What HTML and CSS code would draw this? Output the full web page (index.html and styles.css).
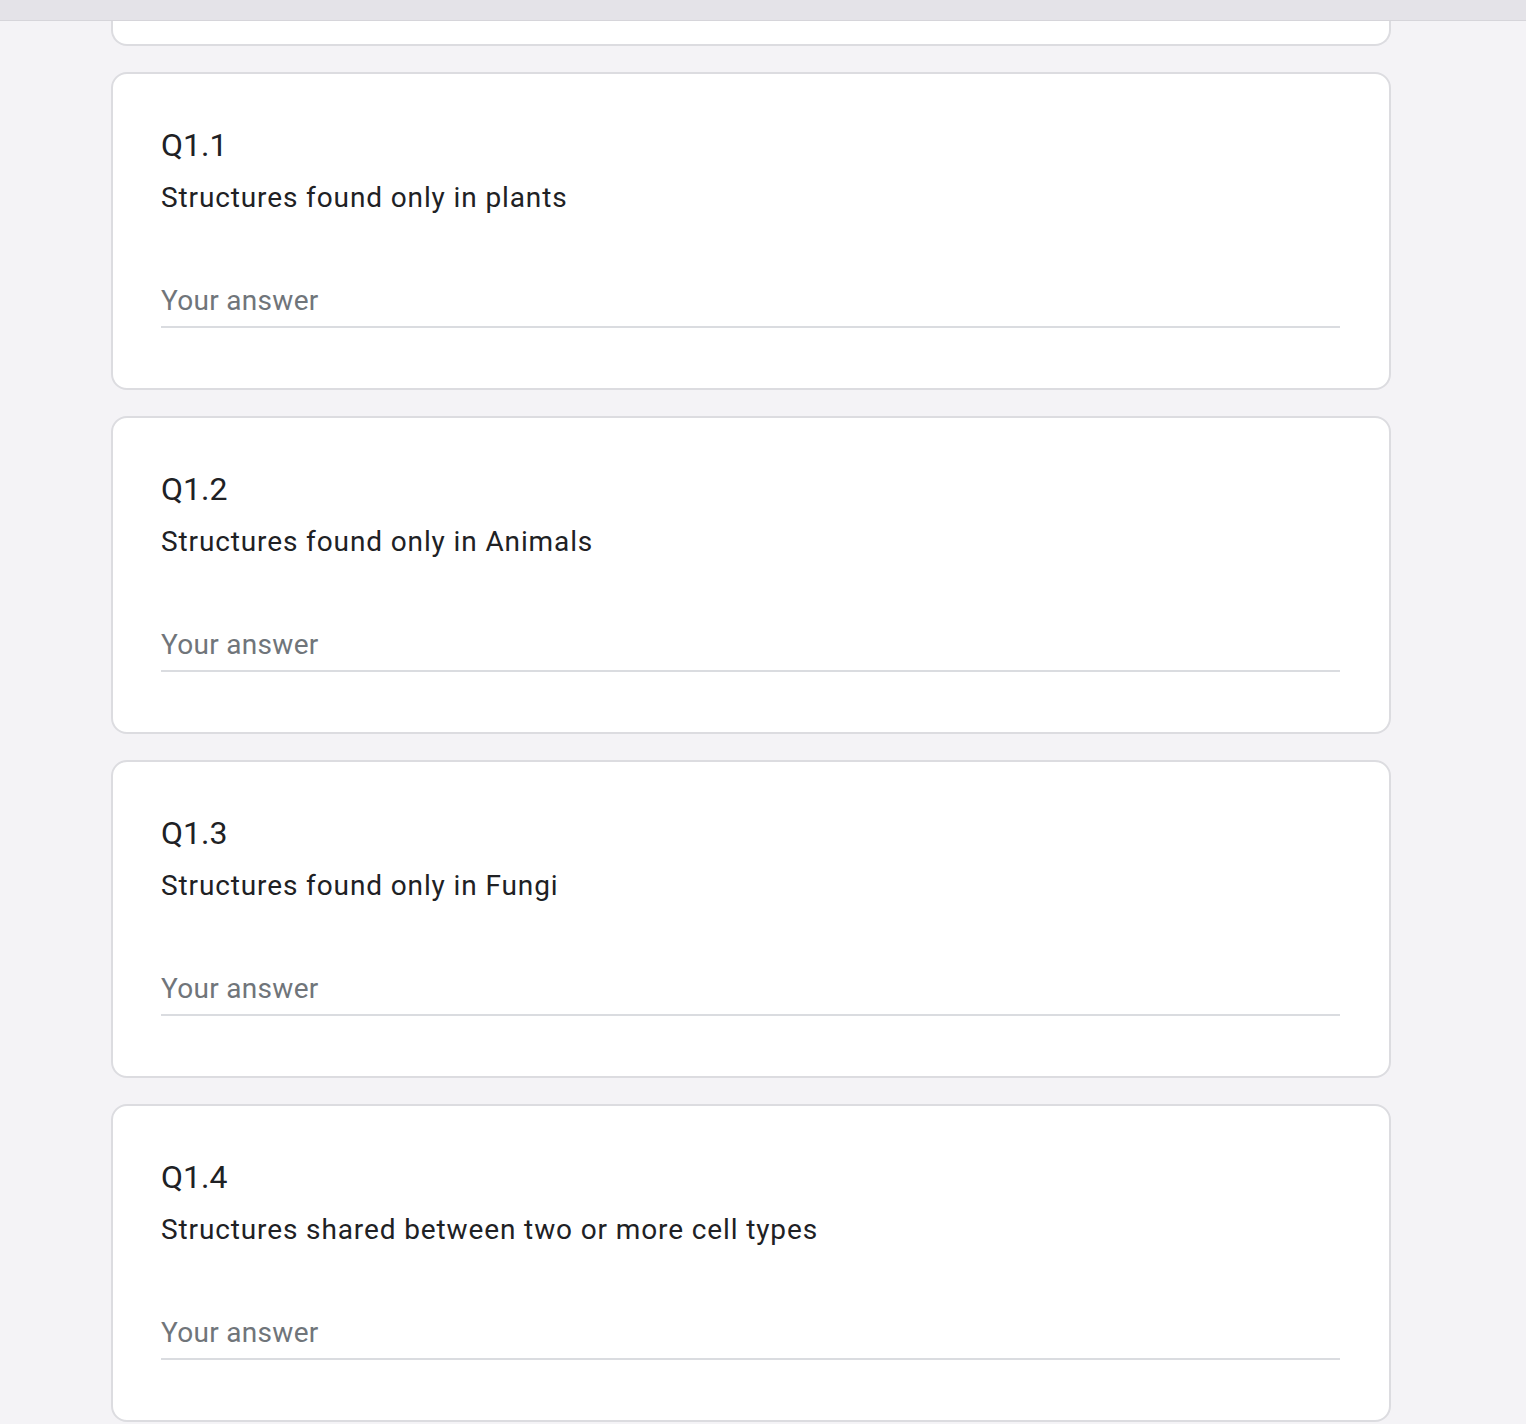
FILE: index.html
```html
<!DOCTYPE html>
<html lang="en">
<head>
<meta charset="utf-8">
<title>Form</title>
<link rel="stylesheet" href="styles.css">
</head>
<body>
<div class="topbar"></div>
<main class="form">
  <div class="card card-cut"></div>
  <section class="card">
    <div class="qnum">Q1.1</div>
    <div class="qtext">Structures found only in plants</div>
    <div class="answer">Your answer</div>
  </section>
  <section class="card">
    <div class="qnum">Q1.2</div>
    <div class="qtext">Structures found only in Animals</div>
    <div class="answer">Your answer</div>
  </section>
  <section class="card">
    <div class="qnum">Q1.3</div>
    <div class="qtext">Structures found only in Fungi</div>
    <div class="answer">Your answer</div>
  </section>
  <section class="card">
    <div class="qnum">Q1.4</div>
    <div class="qtext">Structures shared between two or more cell types</div>
    <div class="answer">Your answer</div>
  </section>
</main>
</body>
</html>
```

FILE: styles.css
```css
html, body {
  margin: 0;
  padding: 0;
}
body {
  background: #f4f3f6;
  font-family: Roboto, "Liberation Sans", Arial, sans-serif;
  color: #202124;
  overflow: hidden;
}
.topbar {
  height: 20px;
  background: #e4e3e8;
  border-bottom: 1px solid #d6d5da;
}
.form {
  width: 1280px;
  margin-left: 111px;
  display: flex;
  flex-direction: column;
  gap: 26px;
}
.card {
  background: #fff;
  border: 2px solid #dcdce0;
  border-radius: 16px;
  padding: 51px 49px 60px 48px;
  box-sizing: border-box;
  height: 318px;
}
.card-cut {
  height: 25px;
  padding: 0;
  border-top: none;
  border-radius: 0 0 16px 16px;
}
.qnum {
  font-size: 32px;
  line-height: 40px;
}
.qtext {
  font-size: 28px;
  line-height: 36px;
  margin-top: 15px;
  letter-spacing: 0.88px;
}
.answer {
  margin-top: 67px;
  font-size: 28px;
  line-height: 36px;
  letter-spacing: 0.3px;
  color: #70757a;
  padding-bottom: 7px;
  border-bottom: 2px solid #dadce0;
}
```
